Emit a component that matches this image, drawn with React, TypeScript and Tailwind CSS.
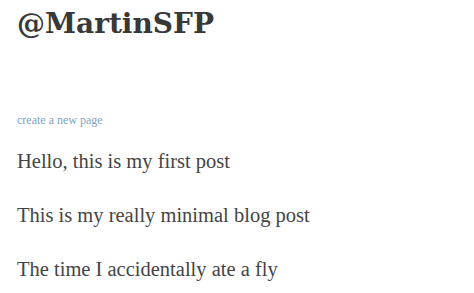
export default function App() {
  const posts = [
    'Hello, this is my first post',
    'This is my really minimal blog post',
    'The time I accidentally ate a fly',
  ]

  return (
    <div className="min-h-[293px] w-[474px] bg-white px-[17px] pt-[4px]">
      {/* Header */}
      <h1 className="font-['DejaVu_Serif',serif] text-[28px] leading-[40px] font-bold text-[#383838]">
        @MartinSFP
      </h1>

      <a
        href="#"
        className="mt-[69px] block font-['Liberation_Serif',serif] text-[12px] leading-[14px] text-[#7fa3c4]"
      >
        create a new page
      </a>

      {/* Posts */}
      <ul className="mt-[22px] flex flex-col gap-[30px]">
        {posts.map((p) => (
          <li
            key={p}
            className="font-['Liberation_Serif',serif] text-[20.5px] leading-[24px] text-[#444444]"
          >
            {p}
          </li>
        ))}
      </ul>
    </div>
  )
}
